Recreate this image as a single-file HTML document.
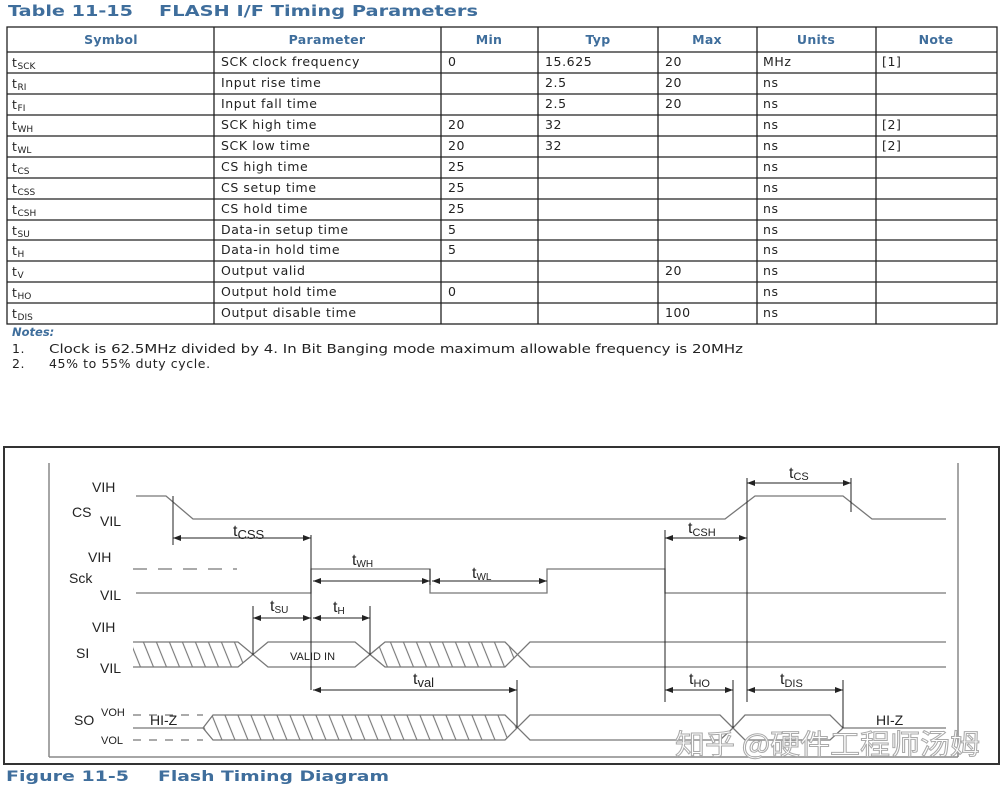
<!DOCTYPE html>
<html><head><meta charset="utf-8"><style>
html,body{margin:0;padding:0;background:#fff;}
svg{display:block;}
.t{font-family:"DejaVu Sans","Liberation Sans",sans-serif;font-size:12.5px;letter-spacing:0.6px;fill:#222;}
.h{font-family:"DejaVu Sans","Liberation Sans",sans-serif;font-size:12.5px;font-weight:bold;fill:#3f6e9c;letter-spacing:0.3px;}
.s{font-size:9px;letter-spacing:0;}
.d{font-family:"Liberation Sans",Arial,sans-serif;font-size:14px;fill:#222;}
.w{stroke:#777;stroke-width:1.3;fill:none;}
.a{stroke:#222;stroke-width:1;fill:none;}
</style></head><body>
<svg width="1004" height="787" viewBox="0 0 1004 787" xmlns="http://www.w3.org/2000/svg">
<defs>
<pattern id="hat" width="13" height="100" patternUnits="userSpaceOnUse" patternTransform="skewX(22)">
<line x1="1" y1="0" x2="1" y2="100" stroke="#777" stroke-width="1.2"/>
</pattern>
<marker id="ar" markerWidth="8" markerHeight="6" refX="8" refY="3" orient="auto" markerUnits="userSpaceOnUse"><path d="M0,0 L8,3 L0,6z" fill="#222"/></marker>
<marker id="al" markerWidth="8" markerHeight="6" refX="0" refY="3" orient="auto" markerUnits="userSpaceOnUse"><path d="M8,0 L0,3 L8,6z" fill="#222"/></marker>
</defs>
<g font-family="DejaVu Sans,sans-serif" font-weight="bold" font-size="15" fill="#3f6e9c">
<text x="8" y="16" textLength="125" lengthAdjust="spacingAndGlyphs">Table 11-15</text>
<text x="159" y="16" textLength="319" lengthAdjust="spacingAndGlyphs">FLASH I/F Timing Parameters</text>
</g>
<g stroke="#222" stroke-width="1.3">
<rect x="7" y="27" width="990" height="297" fill="none"/>
<line x1="214" y1="27" x2="214" y2="324"/><line x1="441" y1="27" x2="441" y2="324"/>
<line x1="538" y1="27" x2="538" y2="324"/><line x1="658" y1="27" x2="658" y2="324"/>
<line x1="757" y1="27" x2="757" y2="324"/><line x1="876" y1="27" x2="876" y2="324"/>
<line x1="7" y1="52" x2="997" y2="52"/><line x1="7" y1="73" x2="997" y2="73"/>
<line x1="7" y1="94" x2="997" y2="94"/><line x1="7" y1="115" x2="997" y2="115"/>
<line x1="7" y1="136" x2="997" y2="136"/><line x1="7" y1="157" x2="997" y2="157"/>
<line x1="7" y1="178" x2="997" y2="178"/><line x1="7" y1="199" x2="997" y2="199"/>
<line x1="7" y1="220" x2="997" y2="220"/><line x1="7" y1="240" x2="997" y2="240"/>
<line x1="7" y1="261" x2="997" y2="261"/><line x1="7" y1="282" x2="997" y2="282"/>
<line x1="7" y1="303" x2="997" y2="303"/>
</g>
<g class="h" text-anchor="middle">
<text x="111" y="44">Symbol</text><text x="327" y="44">Parameter</text><text x="489" y="44">Min</text>
<text x="598" y="44">Typ</text><text x="707" y="44">Max</text><text x="816" y="44">Units</text><text x="936" y="44">Note</text>
</g>
<g class="t">
<text x="12" y="67">t<tspan class="s" dy="2">SCK</tspan></text><text x="221" y="66">SCK clock frequency</text><text x="448" y="66">0</text><text x="545" y="66">15.625</text><text x="665" y="66">20</text><text x="763" y="66">MHz</text><text x="882" y="66">[1]</text>
<text x="12" y="88">t<tspan class="s" dy="2">RI</tspan></text><text x="221" y="87">Input rise time</text><text x="545" y="87">2.5</text><text x="665" y="87">20</text><text x="763" y="87">ns</text>
<text x="12" y="109">t<tspan class="s" dy="2">FI</tspan></text><text x="221" y="108">Input fall time</text><text x="545" y="108">2.5</text><text x="665" y="108">20</text><text x="763" y="108">ns</text>
<text x="12" y="130">t<tspan class="s" dy="2">WH</tspan></text><text x="221" y="129">SCK high time</text><text x="448" y="129">20</text><text x="545" y="129">32</text><text x="763" y="129">ns</text><text x="882" y="129">[2]</text>
<text x="12" y="151">t<tspan class="s" dy="2">WL</tspan></text><text x="221" y="150">SCK low time</text><text x="448" y="150">20</text><text x="545" y="150">32</text><text x="763" y="150">ns</text><text x="882" y="150">[2]</text>
<text x="12" y="172">t<tspan class="s" dy="2">CS</tspan></text><text x="221" y="171">CS high time</text><text x="448" y="171">25</text><text x="763" y="171">ns</text>
<text x="12" y="193">t<tspan class="s" dy="2">CSS</tspan></text><text x="221" y="192">CS setup time</text><text x="448" y="192">25</text><text x="763" y="192">ns</text>
<text x="12" y="214">t<tspan class="s" dy="2">CSH</tspan></text><text x="221" y="213">CS hold time</text><text x="448" y="213">25</text><text x="763" y="213">ns</text>
<text x="12" y="235">t<tspan class="s" dy="2">SU</tspan></text><text x="221" y="234">Data-in setup time</text><text x="448" y="234">5</text><text x="763" y="234">ns</text>
<text x="12" y="255">t<tspan class="s" dy="2">H</tspan></text><text x="221" y="254">Data-in hold time</text><text x="448" y="254">5</text><text x="763" y="254">ns</text>
<text x="12" y="276">t<tspan class="s" dy="2">V</tspan></text><text x="221" y="275">Output valid</text><text x="665" y="275">20</text><text x="763" y="275">ns</text>
<text x="12" y="297">t<tspan class="s" dy="2">HO</tspan></text><text x="221" y="296">Output hold time</text><text x="448" y="296">0</text><text x="763" y="296">ns</text>
<text x="12" y="318">t<tspan class="s" dy="2">DIS</tspan></text><text x="221" y="317">Output disable time</text><text x="665" y="317">100</text><text x="763" y="317">ns</text>
</g>
<text x="12" y="336" font-family="DejaVu Sans,sans-serif" font-weight="bold" font-style="italic" font-size="11.5" fill="#3f6e9c">Notes:</text>
<g class="t">
<text x="12" y="353">1.</text><text x="49" y="353" style="letter-spacing:0" textLength="694" lengthAdjust="spacingAndGlyphs">Clock is 62.5MHz divided by 4. In Bit Banging mode maximum allowable frequency is 20MHz</text>
<text x="12" y="368">2.</text><text x="49" y="368">45% to 55% duty cycle.</text>
</g>

<rect x="4" y="447" width="995" height="317" fill="none" stroke="#333" stroke-width="2"/>
<line x1="49" y1="463" x2="49" y2="757" stroke="#888" stroke-width="1.5"/>
<line x1="958" y1="463" x2="958" y2="757" stroke="#888" stroke-width="1.5"/>
<line x1="49" y1="757" x2="958" y2="757" stroke="#888" stroke-width="1.5"/>
<polyline class="w" points="136,496 166,496 193,519 725,519 755,496 843,496 872,519 946,519"/>
<line class="w" x1="133" y1="569" x2="237" y2="569" stroke-dasharray="14,11"/>
<polyline class="w" points="136,593 311,593 311,569 430,569 430,593 547,593 547,569 665,569 665,593 946,593"/>
<polygon points="133,642 238,642 253,655 238,667 133,667" fill="url(#hat)"/>
<polygon points="385,642 505,642 517,655 505,667 385,667 370,655" fill="url(#hat)"/>
<polyline class="w" points="133,642 238,642 268,667 355,667 385,642 505,642 530,667 946,667"/>
<polyline class="w" points="133,667 238,667 268,642 355,642 385,667 505,667 530,642 946,642"/>
<line class="w" x1="133" y1="715" x2="203" y2="715" stroke-dasharray="8,8"/>
<line class="w" x1="133" y1="740" x2="203" y2="740" stroke-dasharray="8,8"/>
<polygon points="213,715 505,715 517,728 505,740 213,740 203,728" fill="url(#hat)"/>
<polyline class="w" points="133,728 203,728 213,715 505,715 530,740 720,740 733,728 745,715 830,715 843,728 946,728"/>
<polyline class="w" points="203,728 213,740 505,740 530,715 720,715 733,728 745,740 830,740 843,728"/>
<g stroke="#222" stroke-width="1">
<line x1="173" y1="496" x2="173" y2="545"/><line x1="311" y1="535" x2="311" y2="690"/>
<line x1="253" y1="606" x2="253" y2="655"/><line x1="370" y1="606" x2="370" y2="655"/>
<line x1="430" y1="569" x2="430" y2="585"/>
<line x1="517" y1="680" x2="517" y2="728"/>
<line x1="665" y1="530" x2="665" y2="702"/><line x1="747" y1="478" x2="747" y2="702"/>
<line x1="851" y1="478" x2="851" y2="512"/>
<line x1="733" y1="680" x2="733" y2="728"/><line x1="843" y1="680" x2="843" y2="728"/>
</g>
<g class="a" marker-start="url(#al)" marker-end="url(#ar)">
<line x1="173" y1="538" x2="311" y2="538"/>
<line x1="313" y1="581" x2="430" y2="581"/><line x1="432" y1="581" x2="547" y2="581"/>
<line x1="253" y1="618" x2="311" y2="618"/><line x1="313" y1="618" x2="370" y2="618"/>
<line x1="313" y1="690" x2="517" y2="690"/>
<line x1="665" y1="538" x2="747" y2="538"/><line x1="747" y1="483" x2="851" y2="483"/>
<line x1="665" y1="690" x2="733" y2="690"/><line x1="747" y1="690" x2="843" y2="690"/>
</g>
<g class="d">
<text x="92" y="492">VIH</text><text x="72" y="517">CS</text><text x="100" y="526">VIL</text>
<text x="88" y="562">VIH</text><text x="69" y="583">Sck</text><text x="100" y="600">VIL</text>
<text x="92" y="632">VIH</text><text x="76" y="658">SI</text><text x="100" y="673">VIL</text>
<text x="74" y="725">SO</text><text x="101" y="716" font-size="11">VOH</text><text x="101" y="744" font-size="11">VOL</text>
<text x="150" y="725">HI-Z</text><text x="876" y="725">HI-Z</text>
<text x="290" y="660" font-size="11">VALID IN</text>
<text x="233" y="536" font-size="16">t<tspan font-size="13" dy="3">CSS</tspan></text>
<text x="352" y="565" font-size="16">t<tspan font-size="10" dy="2">WH</tspan></text>
<text x="472" y="578" font-size="16">t<tspan font-size="10" dy="2">WL</tspan></text>
<text x="270" y="611" font-size="16">t<tspan font-size="10" dy="2">SU</tspan></text>
<text x="333" y="612" font-size="16">t<tspan font-size="10" dy="2">H</tspan></text>
<text x="413" y="684" font-size="16">t<tspan font-size="13" dy="3">val</tspan></text>
<text x="688" y="533" font-size="16">t<tspan font-size="11" dy="3">CSH</tspan></text>
<text x="789" y="478" font-size="16">t<tspan font-size="11" dy="2">CS</tspan></text>
<text x="689" y="684" font-size="16">t<tspan font-size="11" dy="3">HO</tspan></text>
<text x="780" y="684" font-size="16">t<tspan font-size="11" dy="3">DIS</tspan></text>
</g>
<text x="675" y="754" font-family="'Noto Sans CJK SC',sans-serif" font-size="28" fill="#fff" stroke="#aaa" stroke-width="1" textLength="305" lengthAdjust="spacingAndGlyphs">知乎 @硬件工程师汤姆</text>
<g font-family="DejaVu Sans,sans-serif" font-weight="bold" font-size="14" fill="#3f6e9c">
<text x="6" y="781" textLength="123" lengthAdjust="spacingAndGlyphs">Figure 11-5</text>
<text x="158" y="781" textLength="231" lengthAdjust="spacingAndGlyphs">Flash Timing Diagram</text>
</g>
</svg>
</body></html>
